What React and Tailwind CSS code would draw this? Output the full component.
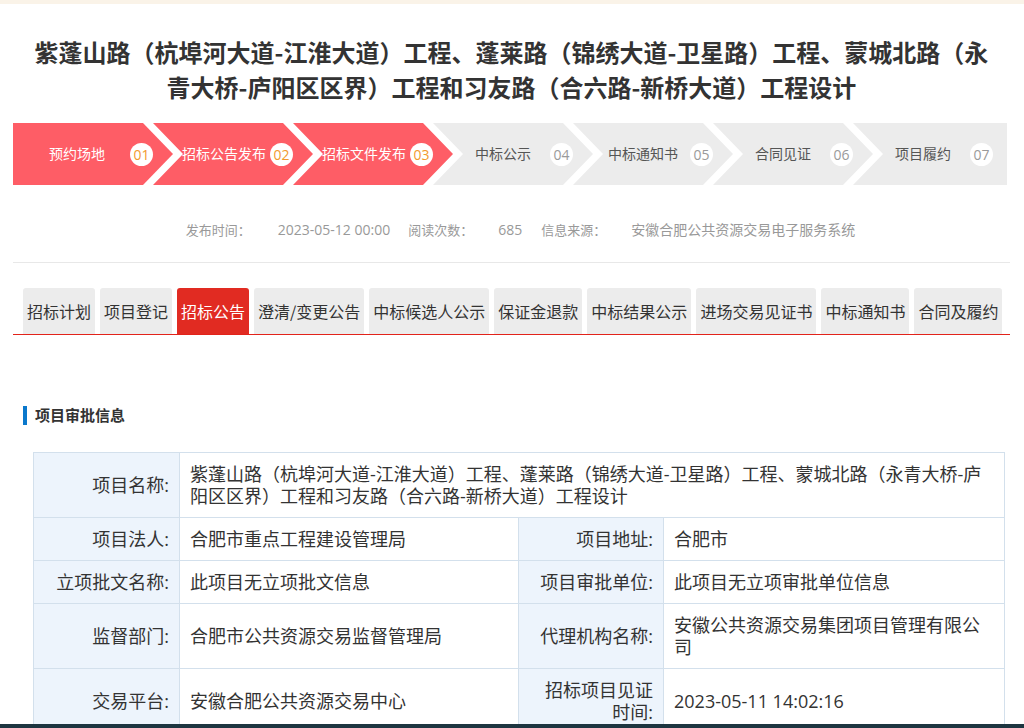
import React from "react";

const steps = [
  { name: "预约场地", n: "01", done: true },
  { name: "招标公告发布", n: "02", done: true },
  { name: "招标文件发布", n: "03", done: true },
  { name: "中标公示", n: "04", done: false },
  { name: "中标通知书", n: "05", done: false },
  { name: "合同见证", n: "06", done: false },
  { name: "项目履约", n: "07", done: false },
];

const tabs = [
  "招标计划",
  "项目登记",
  "招标公告",
  "澄清/变更公告",
  "中标候选人公示",
  "保证金退款",
  "中标结果公示",
  "进场交易见证书",
  "中标通知书",
  "合同及履约",
];

const Step = ({ step, index }) => {
  const first = index === 0;
  const last = index === steps.length - 1;
  const clip = first
    ? "w-[160px] -mr-[20px] [clip-path:polygon(0_0,130px_0,160px_50%,130px_100%,0_100%)]"
    : last
    ? "w-[154px] [clip-path:polygon(0_0,100%_0,100%_100%,0_100%,30px_50%)]"
    : "w-[160px] -mr-[20px] [clip-path:polygon(0_0,130px_0,160px_50%,130px_100%,0_100%,30px_50%)]";

  return (
    <div
      className={`h-full flex items-center shrink-0 ${clip} ${
        step.done ? "bg-[#fe5d66] text-white" : "bg-[#ececec] text-[#555]"
      }`}
    >
      <span
        className={`w-[82px] text-center text-[14px] leading-[20px] whitespace-nowrap ${
          first ? "ml-[23px]" : "ml-[29px]"
        }`}
      >
        {step.name}
      </span>
      <span
        className={`w-[23px] h-[23px] rounded-full bg-white flex items-center justify-center text-[14px] ${
          first ? "ml-[12px]" : "ml-[6px]"
        } ${step.done ? "text-[#f29a2e]" : "text-[#9a9a9a]"}`}
      >
        {step.n}
      </span>
    </div>
  );
};

const Label = ({ children }) => (
  <td className="bg-[#edf4fc] border border-[#d3e0ec] text-right pr-[10px] pl-[12px] py-[10px] align-middle">
    {children}
  </td>
);

const Value = ({ children, span }) => (
  <td
    colSpan={span}
    className="border border-[#d3e0ec] text-left pl-[10px] pr-[10px] py-[10px] align-middle"
  >
    {children}
  </td>
);

export default function App() {
  return (
    <div className="min-h-screen bg-white font-['Open_Sans','Noto_Sans_CJK_SC',sans-serif] text-[#333]">
      <div className="h-[4px] bg-[#faf3e8]"></div>

      <div className="mx-[13px] w-[997px]">
        <h1 className="mt-[30px] px-[18px] text-center text-[24px] leading-[35px] font-bold text-[#333] font-['Noto_Sans_CJK_SC',sans-serif]">
          紫蓬山路（杭埠河大道-江淮大道）工程、蓬莱路（锦绣大道-卫星路）工程、蒙城北路（永青大桥-庐阳区区界）工程和习友路（合六路-新桥大道）工程设计
        </h1>

        <div className="mt-[19px] h-[62px] flex">
          {steps.map((s, i) => (
            <Step key={s.n} step={s} index={i} />
          ))}
        </div>

        <div className="pt-[35px] pb-[22px] pl-[18px] border-b border-[#e8e8e8] flex justify-center items-baseline text-[13px] leading-[20px] text-[#999]">
          <span>发布时间：</span>
          <span className="ml-[27px] text-[14px]">2023-05-12 00:00</span>
          <span className="ml-[18px]">阅读次数：</span>
          <span className="ml-[25px] text-[14px]">685</span>
          <span className="ml-[19px]">信息来源：</span>
          <span className="ml-[25px] text-[14px]">安徽合肥公共资源交易电子服务系统</span>
        </div>

        <div className="mt-[25px] flex gap-[5px] pl-[10px] border-b border-[#e2231a]">
          {tabs.map((t) => {
            const active = t === "招标公告";
            return (
              <div
                key={t}
                className={`h-[46px] px-[4px] flex items-center rounded-t-[3px] text-[16px] whitespace-nowrap font-['Noto_Sans_CJK_SC',sans-serif] ${
                  active ? "bg-[#e12b22] text-white" : "bg-[#ececec] text-[#333]"
                }`}
              >
                {t}
              </div>
            );
          })}
        </div>

        <div className="mt-[70px] ml-[10px] flex items-center gap-[8px]">
          <div className="w-[4px] h-[19px] bg-[#0a78cc]"></div>
          <span className="text-[15px] leading-[20px] font-bold text-[#333] font-['Noto_Sans_CJK_SC',sans-serif]">
            项目审批信息
          </span>
        </div>

        <table className="mt-[27px] ml-[20px] w-[971px] border-collapse table-fixed text-[18px] leading-[22px] text-[#333]">
          <colgroup>
            <col className="w-[146px]" />
            <col className="w-[339px]" />
            <col className="w-[145px]" />
            <col className="w-[341px]" />
          </colgroup>
          <tbody>
            <tr>
              <Label>项目名称:</Label>
              <Value span={3}>
                紫蓬山路（杭埠河大道-江淮大道）工程、蓬莱路（锦绣大道-卫星路）工程、蒙城北路（永青大桥-庐阳区区界）工程和习友路（合六路-新桥大道）工程设计
              </Value>
            </tr>
            <tr>
              <Label>项目法人:</Label>
              <Value>合肥市重点工程建设管理局</Value>
              <Label>项目地址:</Label>
              <Value>合肥市</Value>
            </tr>
            <tr>
              <Label>立项批文名称:</Label>
              <Value>此项目无立项批文信息</Value>
              <Label>项目审批单位:</Label>
              <Value>此项目无立项审批单位信息</Value>
            </tr>
            <tr>
              <Label>监督部门:</Label>
              <Value>合肥市公共资源交易监督管理局</Value>
              <Label>代理机构名称:</Label>
              <Value>安徽公共资源交易集团项目管理有限公司</Value>
            </tr>
            <tr>
              <Label>交易平台:</Label>
              <Value>安徽合肥公共资源交易中心</Value>
              <Label>招标项目见证时间:</Label>
              <Value>2023-05-11 14:02:16</Value>
            </tr>
          </tbody>
        </table>
        <div className="h-[40px]"></div>
      </div>

      <div className="fixed bottom-0 left-0 right-0 h-[4px] bg-[#1d3540]"></div>
    </div>
  );
}
